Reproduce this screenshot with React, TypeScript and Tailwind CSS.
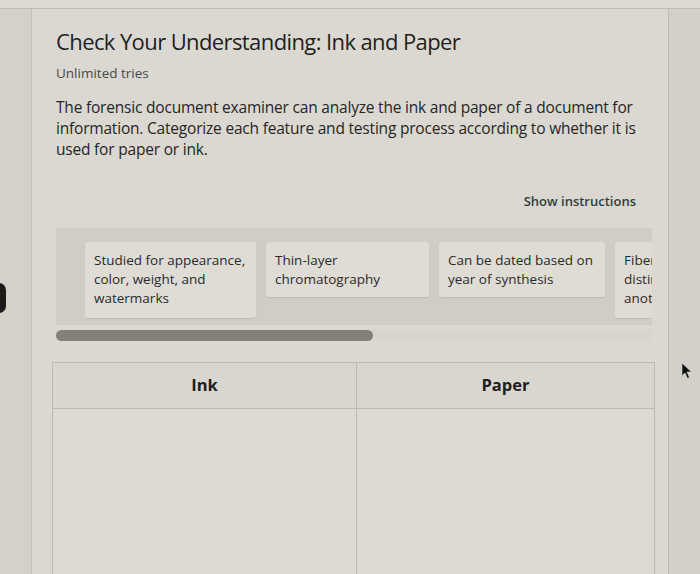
import React from 'react';

const cards = [
  { lines: ['Studied for appearance,', 'color, weight, and', 'watermarks'], w: 'w-[171px]', h: 'h-[76px]' },
  { lines: ['Thin-layer', 'chromatography'], w: 'w-[163px]', h: 'h-[55px]' },
  { lines: ['Can be dated based on', 'year of synthesis'], w: 'w-[166px]', h: 'h-[55px]' },
  { lines: ['Fibers can be', 'distinguished from one', 'another'], w: 'w-[166px]', h: 'h-[76px]' },
];

export default function App() {
  return (
    <div className="relative w-[700px] h-[574px] overflow-hidden bg-[#d6d3cc] font-['Open_Sans',sans-serif] text-[#222]">
      <div className="h-[9px] border-b border-[#bfbcb5] bg-[#dcd9d2]" />
      <div className="flex h-[565px]">
        <div className="w-[32px] shrink-0 border-r border-[#c2bfb8] bg-[#d4d1ca]" />
        <div className="w-[637px] shrink-0 border-r border-[#bfbcb5] bg-[#dbd8d1] pl-[24px] pr-[16px]">
          <h1 className="mt-[16px] text-[22px] leading-[32px] tracking-[-0.6px] text-[#1f1f1f]">
            Check Your Understanding: Ink and Paper
          </h1>
          <p className="mt-[6px] text-[13.5px] leading-[20px] text-[#4a4a48]">Unlimited tries</p>
          <p className="mt-[14px] pr-[4px] text-[15.5px] leading-[21px] tracking-[-0.2px] text-[#262626]">
            The forensic document examiner can analyze the ink and paper of a document for information. Categorize each feature and testing process according to whether it is used for paper or ink.
          </p>
          <div className="mt-[31px] flex justify-end pr-[16px]">
            <span className="text-[13px] leading-[20px] font-semibold text-[#2c3e44]">Show instructions</span>
          </div>
          <div className="mt-[17px] h-[97px] overflow-hidden bg-[#d0cdc6] pl-[29px] pt-[14px]">
            <div className="flex gap-[10px]">
              {cards.map((c) => (
                <div
                  key={c.lines[0]}
                  className={`${c.w} ${c.h} shrink-0 rounded-[3px] bg-[#dfdcd5] px-[9px] pt-[9px] text-[13.5px] leading-[19px] text-[#2a2a2a] shadow-[0_1px_1px_rgba(0,0,0,0.08)]`}
                >
                  {c.lines.map((l) => (
                    <div key={l} className="whitespace-nowrap">{l}</div>
                  ))}
                </div>
              ))}
            </div>
          </div>
          <div className="mt-[5px] h-[11px] bg-[#d8d5ce]">
            <div className="h-[11px] w-[317px] rounded-full bg-[#828079]" />
          </div>
          <div className="mt-[21px] -ml-[4px] w-[603px] border border-[#bcb9b2]">
            <div className="grid grid-cols-[304px_1fr] h-[46px] border-b border-[#bcb9b2] bg-[#d9d6cf]">
              <div className="flex items-center justify-center border-r border-[#bcb9b2] text-[16.5px] font-bold text-[#1f1f1f]">Ink</div>
              <div className="flex items-center justify-center text-[16.5px] font-bold text-[#1f1f1f]">Paper</div>
            </div>
            <div className="grid grid-cols-[304px_1fr] h-[200px] bg-[#dcd9d2]">
              <div className="border-r border-[#bcb9b2]" />
              <div />
            </div>
          </div>
        </div>
        <div className="flex-1 bg-[#d3d0c9]" />
      </div>
      <div className="absolute left-[-8px] top-[283px] h-[30px] w-[14px] rounded-full bg-[#1c1a18]" />
      <svg className="absolute left-[681px] top-[362px]" width="12" height="18" viewBox="0 0 12 18">
        <path d="M1 1 L1 14 L4 11 L6.5 16.5 L8.5 15.5 L6 10 L10.5 10 Z" fill="#111" stroke="#ddd" strokeWidth="0.6" />
      </svg>
    </div>
  );
}
